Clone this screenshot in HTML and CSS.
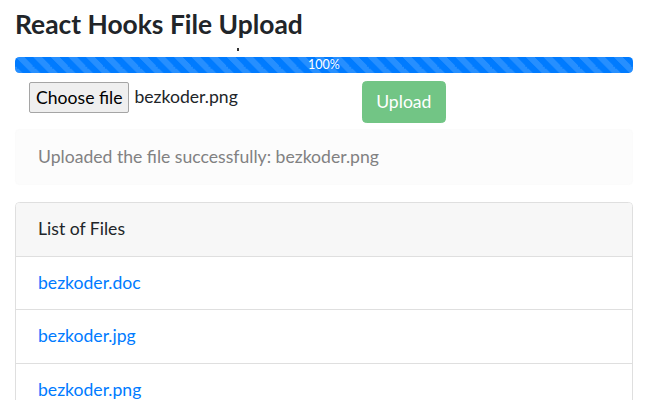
FILE: index.html
```html
<!DOCTYPE html>
<html>
<head>
    <title>React Hooks File Upload</title>
    <link rel="stylesheet" href="styles.css">
</head>
<body>
    <div class="container">
        <h4 class="title">React Hooks File Upload</h4>
        <div class="caret"></div>

        <div class="progress">
            <div class="progress-bar" style="width: 100%">100%</div>
        </div>

        <div class="upload-row">
            <label class="file-field">
                <button class="choose">Choose file</button>
                <span class="file-name">bezkoder.png</span>
            </label>
            <button class="btn-upload">Upload</button>
        </div>

        <div class="alert">Uploaded the file successfully: bezkoder.png</div>

        <div class="card">
            <div class="card-header">List of Files</div>
            <ul class="file-list">
                <li><a href="#">bezkoder.doc</a></li>
                <li><a href="#">bezkoder.jpg</a></li>
                <li><a href="#">bezkoder.png</a></li>
            </ul>
        </div>
    </div>
</body>
</html>
```

FILE: styles.css
```css
body {
    margin: 0;
    font-family: 'Lato', 'Noto Sans', sans-serif;
    font-size: 17.6px;
    line-height: 1.5;
    color: #212529;
    background-color: #fff;
}
.container {
    padding: 0 17px 0 15px;
}
.title {
    margin: 9px 0 0;
    font-size: 26.4px;
    font-weight: 700;
    line-height: 1.2;
}
.caret {
    width: 2px;
    height: 3px;
    margin: 7px 0 0 222px;
    background-color: #333;
}
.progress {
    height: 16px;
    margin-top: 6px;
    border-radius: 4.4px;
    background-color: #e9ecef;
    overflow: hidden;
}
.progress-bar {
    height: 100%;
    background-color: #007bff;
    background-image: linear-gradient(45deg, rgba(255, 255, 255, .15) 25%, transparent 25%, transparent 50%, rgba(255, 255, 255, .15) 50%, rgba(255, 255, 255, .15) 75%, transparent 75%, transparent);
    background-size: 17.6px 17.6px;
    color: #fff;
    font-size: 12.5px;
    line-height: 16px;
    text-align: center;
}
.upload-row {
    display: flex;
    align-items: flex-start;
    padding-left: 14px;
    margin-top: 8px;
}
.file-field {
    display: flex;
    align-items: center;
    width: 333px;
    margin-top: 1px;
}
.choose {
    font-family: inherit;
    font-size: 17.6px;
    padding: 4px 6px;
    border: 1px solid #a5a5a5;
    border-radius: 2px;
    background-color: #efefef;
    color: #000;
}
.file-name {
    margin-left: 5px;
}
.btn-upload {
    font-family: inherit;
    font-size: 17.6px;
    line-height: 1.5;
    padding: 7px 13.2px;
    border: 1px solid #28a745;
    border-radius: 4.4px;
    background-color: #28a745;
    color: #fff;
    opacity: .65;
}
.alert {
    margin-top: 6px;
    padding: 13.6px 22px;
    border: 1px solid #fbfbfb;
    border-radius: 4.4px;
    background-color: #fcfcfc;
    color: #818182;
}
.card {
    margin-top: 17px;
    border: 1px solid #dfdfdf;
    border-radius: 4.4px;
    overflow: hidden;
}
.card-header {
    padding: 13.6px 22px 13.2px;
    background-color: #f7f7f7;
    border-bottom: 1px solid #dfdfdf;
}
.file-list {
    list-style: none;
    margin: 0;
    padding: 0;
}
.file-list li {
    padding: 13px 22px;
    border-bottom: 1px solid #dfdfdf;
}
.file-list a {
    color: #007bff;
    text-decoration: none;
}
```
